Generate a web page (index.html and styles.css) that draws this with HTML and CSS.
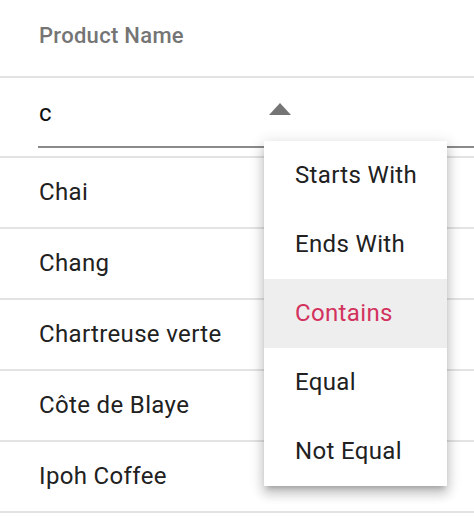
FILE: index.html
```html
<!DOCTYPE html>
<html>
<head>
<meta charset="utf-8">
<link rel="stylesheet" href="styles.css">
</head>
<body>
<div class="grid">
  <div class="head">Product Name</div>
  <div class="filter-row">
    <div class="filter">
      <span class="filter-value">c</span>
      <span class="caret"></span>
    </div>
  </div>
  <div class="row">Chai</div>
  <div class="row">Chang</div>
  <div class="row">Chartreuse verte</div>
  <div class="row">Côte de Blaye</div>
  <div class="row">Ipoh Coffee</div>
  <ul class="menu">
    <li class="item">Starts With</li>
    <li class="item">Ends With</li>
    <li class="item active">Contains</li>
    <li class="item">Equal</li>
    <li class="item">Not Equal</li>
  </ul>
</div>
</body>
</html>
```
FILE: styles.css
```css
html, body {
  margin: 0;
  padding: 0;
  background: #fff;
}
body {
  font-family: Roboto, "Liberation Sans", sans-serif;
  color: #212121;
  overflow: hidden;
}
.grid {
  position: relative;
  width: 474px;
}
.head {
  height: 70px;
  padding-bottom: 6px;
  display: flex;
  align-items: center;
  padding-left: 39px;
  font-size: 22px;
  font-weight: 500;
  letter-spacing: 0.3px;
  color: #757575;
  border-bottom: 2px solid #e3e3e3;
}
.filter-row {
  height: 78px;
  padding-left: 38px;
  border-bottom: 2px solid #e3e3e3;
  display: flex;
}
.filter {
  flex: 1;
  height: 68px;
  border-bottom: 2px solid #8a8a8a;
  display: flex;
  align-items: center;
  padding-left: 1px;
}
.filter-value {
  font-size: 24px;
  color: #111;
  width: 230px;
  margin-top: 2px;
}
.caret {
  width: 0;
  height: 0;
  border-left: 11.5px solid transparent;
  border-right: 11.5px solid transparent;
  border-bottom: 12px solid #757575;
  margin-top: -7px;
}
.row {
  height: 67px;
  padding-bottom: 2px;
  display: flex;
  align-items: center;
  padding-left: 39px;
  font-size: 24px;
  letter-spacing: 0.35px;
  border-bottom: 2px solid #e3e3e3;
}
.menu {
  position: absolute;
  left: 264px;
  top: 141px;
  width: 183px;
  margin: 0;
  padding: 0;
  list-style: none;
  background: #fff;
  box-shadow: 0 5px 5px -3px rgba(0,0,0,0.2), 0 8px 10px 1px rgba(0,0,0,0.14), 0 3px 14px 2px rgba(0,0,0,0.12);
}
.item {
  height: 67px;
  padding-bottom: 2px;
  display: flex;
  align-items: center;
  padding-left: 31px;
  font-size: 24px;
  letter-spacing: 0.35px;
  color: #212121;
}
.item.active {
  background: #eeeeee;
  color: #d3325d;
}
```
